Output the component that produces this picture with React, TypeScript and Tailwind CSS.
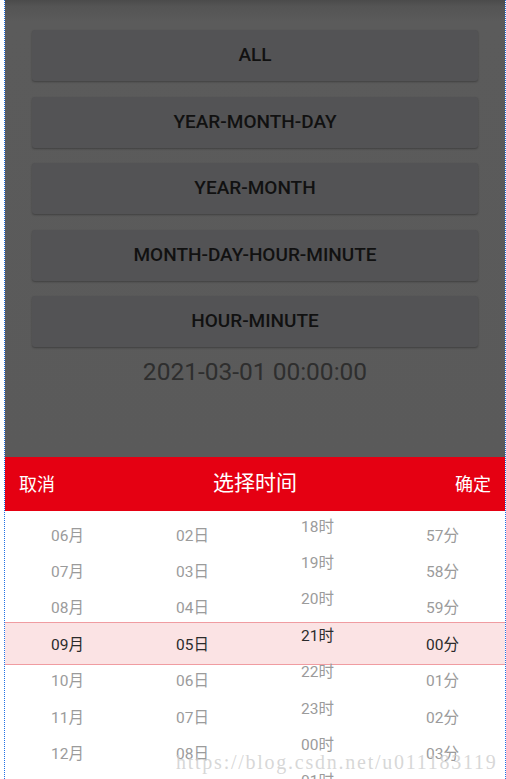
import React from "react"

const modes = ["ALL", "YEAR-MONTH-DAY", "YEAR-MONTH", "MONTH-DAY-HOUR-MINUTE", "HOUR-MINUTE"]

const columns = [
  { items: ["06月", "07月", "08月", "09月", "10月", "11月", "12月"], offset: "pt-[7px]" },
  { items: ["02日", "03日", "04日", "05日", "06日", "07日", "08日"], offset: "pt-[7px]" },
  { items: ["18时", "19时", "20时", "21时", "22时", "23时", "00时", "01时"], offset: "-mt-[2px]" },
  { items: ["57分", "58分", "59分", "00分", "01分", "02分", "03分"], offset: "pt-[7px]" },
]

const App = () => {
  return (
    <div
      className="w-[506px] h-[779px] bg-white overflow-hidden"
      style={{ fontFamily: "Roboto, 'Noto Sans CJK SC', sans-serif" }}
    >
      <div className="ml-[4px] w-[502px] h-full border-x border-dotted border-[#1f6fe6] flex flex-col">
        {/* Dimmed page behind the dialog */}
        <div className="h-[457px] bg-[linear-gradient(to_bottom,#4b4b4b_0px,#545454_6px,#5b5b5b_22px,#5a5a5a_100%)] flex flex-col pt-[30px] px-[27px]">
          <div className="flex flex-col gap-[15.5px]">
            {modes.map((m) => (
              <div
                key={m}
                className="h-[51px] rounded-[3px] bg-[#535355] shadow-[0_1px_2px_rgba(0,0,0,0.3)] flex items-center justify-center text-[19px] font-medium text-[#111111]"
              >
                {m}
              </div>
            ))}
          </div>
          <p className="mt-[8px] text-center text-[24.5px] leading-[34px] text-[#2e2e2e]">2021-03-01 00:00:00</p>
        </div>

        {/* Header bar */}
        <div className="h-[54px] bg-[#e50012] flex items-center justify-between px-[14px] text-white">
          <span className="text-[18px]">取消</span>
          <span className="text-[21px]">选择时间</span>
          <span className="text-[18px]">确定</span>
        </div>

        {/* Wheel picker */}
        <div className="relative flex-1 overflow-hidden bg-white">
          <div className="absolute left-0 right-0 top-[111px] h-[43px] bg-[#fbe3e4] border-y border-[#f09ca1]" />
          <div className="relative grid grid-cols-4">
            {columns.map((col, ci) => (
              <div key={ci} className={`flex flex-col items-center ${col.offset}`}>
                {col.items.map((it, i) => (
                  <div
                    key={it}
                    className={`h-[36.4px] flex items-center text-[15.5px] ${
                      i === 3 ? "text-[#2b2b2b]" : "text-[#9b9b9b]"
                    }`}
                  >
                    {it}
                  </div>
                ))}
              </div>
            ))}
          </div>
          <span
            className="absolute left-[171px] top-[236px] text-[20px] tracking-[1.75px] text-[#cdcdcd]/80 whitespace-nowrap"
            style={{ fontFamily: "'Liberation Serif', serif" }}
          >
            https://blog.csdn.net/u011183119
          </span>
        </div>
      </div>
    </div>
  )
}

export default App
